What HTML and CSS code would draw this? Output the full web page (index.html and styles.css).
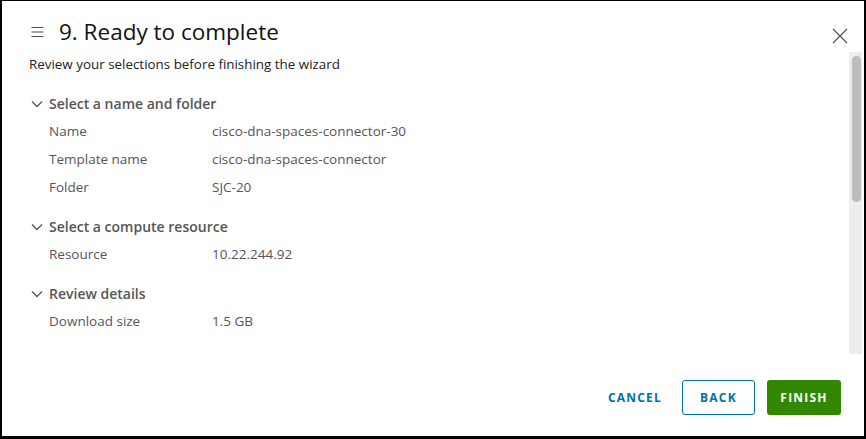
FILE: index.html
```html
<!DOCTYPE html>
<html lang="en">
<head>
    <meta charset="UTF-8">
    <meta name="viewport" content="width=device-width, initial-scale=1.0">
    <title>Ready to complete</title>
    <link rel="stylesheet" href="styles.css">
</head>
<body>
    <div class="modal">
        <div class="modal-header">
            <svg class="menu-icon" width="13" height="12" viewBox="0 0 13 12">
                <path d="M0.5 1.5h12M0.5 6h12M0.5 10.5h12" stroke="#555" stroke-width="1.2"/>
            </svg>
            <h1 class="modal-title">9. Ready to complete</h1>
            <svg class="close-icon" width="16" height="16" viewBox="0 0 16 16">
                <path d="M1 1l14 14M15 1L1 15" stroke="#555" stroke-width="1.3"/>
            </svg>
        </div>

        <div class="modal-body">
            <div class="content">
                <p class="subtitle">Review your selections before finishing the wizard</p>

                <div class="section">
                    <div class="section-title">
                        <svg class="chevron" width="12" height="8" viewBox="0 0 12 8"><path d="M1 1.5l5 5 5-5" fill="none" stroke="#555" stroke-width="1.3"/></svg>
                        Select a name and folder
                    </div>
                    <div class="row"><span class="label">Name</span><span class="value">cisco-dna-spaces-connector-30</span></div>
                    <div class="row"><span class="label">Template name</span><span class="value">cisco-dna-spaces-connector</span></div>
                    <div class="row"><span class="label">Folder</span><span class="value">SJC-20</span></div>
                </div>

                <div class="section">
                    <div class="section-title">
                        <svg class="chevron" width="12" height="8" viewBox="0 0 12 8"><path d="M1 1.5l5 5 5-5" fill="none" stroke="#555" stroke-width="1.3"/></svg>
                        Select a compute resource
                    </div>
                    <div class="row"><span class="label">Resource</span><span class="value">10.22.244.92</span></div>
                </div>

                <div class="section">
                    <div class="section-title">
                        <svg class="chevron" width="12" height="8" viewBox="0 0 12 8"><path d="M1 1.5l5 5 5-5" fill="none" stroke="#555" stroke-width="1.3"/></svg>
                        Review details
                    </div>
                    <div class="row"><span class="label">Download size</span><span class="value">1.5 GB</span></div>
                </div>
            </div>
            <div class="scrollbar"><div class="thumb"></div></div>
        </div>

        <div class="modal-footer">
            <button class="btn btn-link">CANCEL</button>
            <button class="btn btn-outline">BACK</button>
            <button class="btn btn-success">FINISH</button>
        </div>
    </div>
</body>
</html>
```

FILE: styles.css
```css
html, body {
    margin: 0;
    height: 100%;
}
body {
    font-family: "Open Sans", Lato, sans-serif;
    background: #ffffff;
    color: #333;
}
.modal {
    box-sizing: border-box;
    height: 439px;
    display: flex;
    flex-direction: column;
    border-style: solid;
    border-color: #000;
    border-width: 1px 2px 3px 2px;
}
.modal-header {
    box-sizing: border-box;
    display: flex;
    align-items: center;
    height: 51px;
    padding: 10px 16px 0 29px;
}
.menu-icon {
    margin-right: 15px;
}
.modal-title {
    flex: 1;
    margin: 0;
    font-size: 22.5px;
    font-weight: 400;
    color: #111;
}
.close-icon {
    margin-top: 8px;
}
.modal-body {
    display: flex;
    height: 302px;
}
.content {
    flex: 1;
    padding-left: 27px;
}
.subtitle {
    margin: 3px 0 17px;
    font-size: 13.4px;
    color: #222;
}
.section {
    margin-bottom: 12px;
}
.section-title {
    display: flex;
    align-items: center;
    height: 27px;
    font-size: 14px;
    font-weight: 600;
    color: #565656;
}
.chevron {
    margin: 0 6px 0 2px;
}
.row {
    display: flex;
    height: 28px;
    align-items: center;
    padding-left: 20px;
    font-size: 13.5px;
    color: #565656;
}
.label {
    width: 163px;
}
.scrollbar {
    width: 13px;
    margin-right: 2px;
    background: #ededed;
    padding-top: 4px;
}
.thumb {
    width: 9px;
    height: 146px;
    margin-left: 3px;
    border-radius: 5px;
    background: #bdbdbd;
}
.modal-footer {
    flex: 1;
    display: flex;
    justify-content: flex-end;
    align-items: center;
    gap: 12px;
    padding: 4px 23px 0 0;
}
.btn {
    height: 35px;
    padding: 0 12px;
    font-family: inherit;
    font-size: 12px;
    font-weight: 700;
    letter-spacing: 1.2px;
    border-radius: 3px;
    background: none;
    cursor: pointer;
}
.btn-link {
    border: none;
    color: #0072a3;
    padding: 0 8px;
}
.btn-outline {
    width: 73px;
    border: 1px solid #0072a3;
    color: #0072a3;
}
.btn-success {
    width: 74px;
    border: none;
    background: #318700;
    color: #fff;
}
```
